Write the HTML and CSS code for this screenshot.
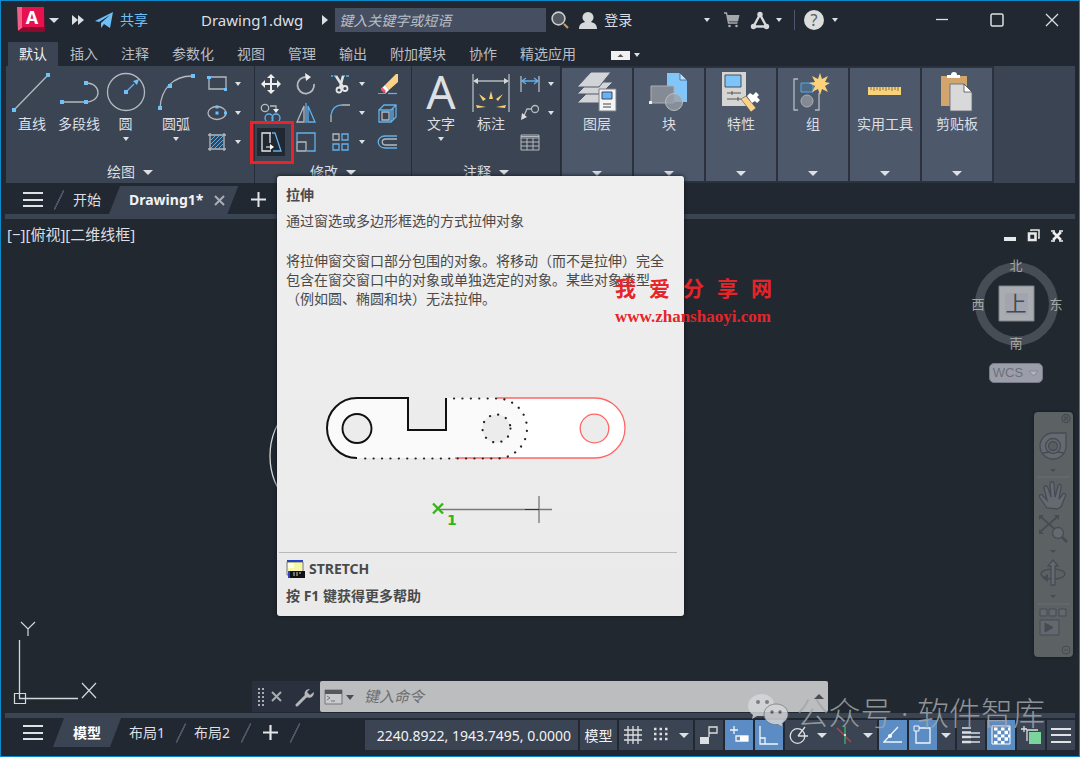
FILE: index.html
```html
<!DOCTYPE html>
<html lang="zh-CN">
<head>
<meta charset="utf-8">
<meta name="viewport" content="width=device-width, initial-scale=1">
<title>Drawing1.dwg</title>
<link rel="stylesheet" href="styles.css">
</head>
<body>
<div class="window">

  <header class="titlebar">
    <button class="app-button" aria-label="应用程序菜单">
      <svg width="30" height="28" viewBox="16 5 30 28"><path d="M17 6h5l2 20-6 4z" fill="#f2608a"/><path d="M22 6h22v20H22z" fill="#e5124d"/><path d="M18 30l5-4h21l1-19v23l-2 1H20z" fill="#8b0a30"/><text class="logo-letter" x="32" y="23" text-anchor="middle">A</text></svg>
      <span class="caret"></span>
    </button>
    <button class="quick-button" aria-label="快速访问"><svg width="14" height="12" viewBox="0 0 14 12"><path d="M1 1l6 5-6 5zM7 1l6 5-6 5z" fill="#dcdfe3"/></svg></button>
    <button class="share-button"><svg width="20" height="18" viewBox="94 9 20 18"><path d="M95 19l18-9-3 16-6-4-3 4v-5l9-8-11 7z" fill="#6fc0f8"/></svg>共享</button>
    <h1 class="doc-title">Drawing1.dwg</h1>
    <span class="caret-right"></span>
    <input class="search" type="search" aria-label="搜索" placeholder="键入关键字或短语">
    <button class="search-button" aria-label="搜索"><svg width="18" height="18" viewBox="0 0 18 18"><path d="M13 13l4 4" stroke="#c99a5b" stroke-width="2.2"/><circle cx="7.5" cy="7.5" r="6.4" fill="#535961" stroke="#c9ccd0" stroke-width="1.6"/></svg></button>
    <button class="login-button"><svg width="20" height="20" viewBox="0 0 20 20"><path d="M1 19c0-5 3-6 6-7a5.500 5.500 0 1 1 6 0c3 1 6 2 6 7z" fill="#d6d8db"/></svg>登录</button>
    <div class="title-tools">
      <button class="caret-button" aria-label="登录选项"><span class="caret small"></span></button>
      <button class="cart" aria-label="购物车"><svg width="18" height="18" viewBox="0 0 18 18"><path d="M1 2h2.500l2 10h9" fill="none" stroke="#a9adb3" stroke-width="1.300"/><path d="M4 4h12.500l-1.500 6.500H5.500z" fill="#a4a8ad"/><circle cx="6.500" cy="15" r="1.300" fill="#a9adb3"/><circle cx="13.500" cy="15" r="1.300" fill="#a9adb3"/></svg></button>
      <button class="apps" aria-label="Autodesk 应用"><svg width="20" height="19" viewBox="0 0 20 19"><path d="M10 3.500L3.500 15.500h13z" fill="none" stroke="#d6d8db" stroke-width="2.400"/><g fill="#d6d8db"><circle cx="10" cy="3.500" r="2.700"/><circle cx="3.500" cy="15.500" r="2.700"/><circle cx="16.500" cy="15.500" r="2.700"/></g></svg><span class="caret small"></span></button>
      <span class="title-divider"></span>
      <button class="help" aria-label="帮助"><span class="help-mark">?</span><span class="caret small"></span></button>
      <button class="win-button first" aria-label="最小化"><svg width="14" height="14" viewBox="0 0 14 14"><path d="M1 6.500h12" stroke="#dcdfe3" stroke-width="1.300"/></svg></button>
      <button class="win-button" aria-label="最大化"><svg width="14" height="14" viewBox="0 0 14 14"><rect x="1" y="1" width="12" height="12" rx="1.500" fill="none" stroke="#dcdfe3" stroke-width="1.500"/></svg></button>
      <button class="win-button" aria-label="关闭"><svg width="14" height="14" viewBox="0 0 14 14"><path d="M1 1l12 12M13 1L1 13" stroke="#dcdfe3" stroke-width="1.300"/></svg></button>
    </div>
  </header>

  <nav class="ribbon-tabs">
    <button class="active">默认</button><button>插入</button><button>注释</button><button>参数化</button><button>视图</button><button>管理</button><button>输出</button><button>附加模块</button><button>协作</button><button>精选应用</button>
    <button class="ribbon-toggle" aria-label="最小化功能区"><svg width="19" height="9" viewBox="0 0 19 9"><path d="M0 0h19v9H0z" fill="#f1f1f1"/><path d="M6.500 6l3-3 3 3z" fill="#555"/></svg><span class="caret small"></span></button>
  </nav>

  <section class="ribbon">
    <div class="panel">
      <div class="panel-tools draw-tools">
        <button class="big"><svg width="42" height="42" viewBox="11 71 42 42"><path d="M14 110L48 75" class="ln"/><g class="grip"><path d="M12 108h4v4h-4zM46 73h4v4h-4z"/></g></svg>直线</button>
        <button class="big"><svg width="42" height="42" viewBox="57 71 42 42"><path d="M61 102h24c16 0 16-19 0-19" class="ln"/><g class="grip"><path d="M59 100h4v4h-4zM83 100h4v4h-4zM83 81h4v4h-4z"/></g></svg>多段线</button>
        <button class="big"><svg width="42" height="42" viewBox="104 71 42 42"><circle cx="125" cy="92" r="18.500" class="ln"/><path d="M125 92l8-8" class="bl"/><g class="grip"><path d="M123 90h4v4h-4zM138 79l-2 6-4-4z"/></g></svg>圆<span class="caret small"></span></button>
        <button class="big"><svg width="42" height="42" viewBox="155 71 42 42"><path d="M160 108c1-19 13-32 32-32" class="ln"/><g class="grip"><path d="M158 106h4v4h-4zM168 84h4v4h-4zM191 74h4v4h-4z"/></g></svg>圆弧<span class="caret small"></span></button>
        <div class="small-column">
          <button class="split" aria-label="矩形"><svg width="24" height="24" viewBox="0 0 24 24"><path d="M4 5h17v12H4z" class="ln"/><path d="M2 4h4v3H2zM19 16h3v3h-3z" class="gripf"/></svg><span class="caret small"></span></button>
          <button class="split" aria-label="椭圆"><svg width="24" height="24" viewBox="0 0 24 24"><ellipse cx="12" cy="12" rx="9" ry="6.500" class="ln"/><path d="M10.500 4.500h3v3h-3zM10.500 10.500h3v3h-3zM19 10.500h3v3h-3z" class="gripf"/></svg><span class="caret small"></span></button>
          <button class="split" aria-label="图案填充"><svg width="24" height="24" viewBox="0 0 24 24"><path d="M6 10l4-4M6 14l8-8M6 18L18 6M10 18l8-8M14 18l4-4" class="bl thin"/><path d="M3 5h18M3 19h18M5 3v18M19 3v18" class="ln"/></svg><span class="caret small"></span></button>
        </div>
      </div>
      <button class="panel-title">绘图<span class="caret"></span></button>
    </div>

    <div class="panel">
      <div class="panel-tools modify-tools">
        <button aria-label="移动"><svg width="24" height="24" viewBox="0 0 24 24"><path d="M12 5v14M5 12h14" stroke="#eee" stroke-width="2"/><path d="M12 2l4 4H8zM12 22l4-4H8zM2 12l4-4v8zM22 12l-4-4v8z" fill="#eee"/></svg></button>
        <button aria-label="旋转"><svg width="24" height="24" viewBox="0 0 24 24"><path d="M12 5a8.300 8.300 0 1 0 8 7" class="ln thick"/><path d="M11 1l6 4-5 4z" fill="#eee"/></svg></button>
        <button class="split" aria-label="修剪"><svg width="24" height="24" viewBox="0 0 24 24"><path d="M2 4h5" class="bl" stroke-dasharray="2 1"/><path d="M13 4h8" class="bl" stroke-dasharray="3 1"/><path d="M7 4l7 11M14 4l-3 12" stroke="#e2e3e5" stroke-width="2.600"/><circle cx="10" cy="18" r="2.500" class="ln wh thick"/><circle cx="16" cy="16.500" r="2.500" class="ln wh thick"/></svg><span class="caret small"></span></button>
        <button aria-label="删除"><svg width="24" height="24" viewBox="0 0 24 24"><path d="M9 13L20 2h2v8L13 18z" fill="#fbd28a"/><path d="M9 13l4 5-3 3-5-4z" fill="#fff"/><path d="M6 15l4 4-2 2-3-3z" fill="#e56"/><path d="M2 21.500h8" stroke="#c9876d"/><path d="M12 21.500h9" class="bl"/></svg></button>

        <button aria-label="复制"><svg width="24" height="24" viewBox="0 0 24 24"><circle cx="6" cy="7" r="3.700" class="ln"/><circle cx="10" cy="17" r="4" class="bl"/><circle cx="17" cy="17" r="4" class="bl"/><path d="M11 5h6v3" class="ln"/><path d="M14 8h6l-3 4z" fill="#eee"/></svg></button>
        <button aria-label="镜像"><svg width="24" height="24" viewBox="0 0 24 24"><path d="M10 5v16H3z" class="ln"/><path d="M14 5v16h7z" class="bl"/><path d="M12 2v20" class="bl"/></svg></button>
        <button class="split" aria-label="圆角"><svg width="24" height="24" viewBox="0 0 24 24"><path d="M2 21v-7M13 4h8" class="ln"/><path d="M2 14C3 8 7 4 13 4" class="bl"/></svg><span class="caret small"></span></button>
        <button aria-label="分解"><svg width="24" height="24" viewBox="0 0 24 24"><path d="M6 11h7v8H6z" class="ln"/><path d="M3 9l5-5h12v12l-5 5H3V9h12v12M15 9l5-5M17 7v12" class="bl"/></svg></button>

        <button class="selected" aria-label="拉伸"><svg width="24" height="24" viewBox="0 0 24 24"><path d="M12 3H3v18h9M11 3v10" class="ln wh"/><path d="M13 3h3l6 18h-8" class="bl"/><path d="M7 17h5" stroke="#fff"/><path d="M11 14l4 3-4 3z" fill="#fff"/></svg></button>
        <button aria-label="缩放"><svg width="24" height="24" viewBox="0 0 24 24"><path d="M3 11V3h18v18h-8" class="bl"/><path d="M3 12h9v9H3z" class="ln"/></svg></button>
        <button class="split" aria-label="阵列"><svg width="24" height="24" viewBox="0 0 24 24"><path d="M4 4h6v6H4z" class="ln"/><path d="M13 4h6v6h-6zM4 14h6v6H4zM13 14h6v6h-6z" class="bl"/></svg><span class="caret small"></span></button>
        <button aria-label="偏移"><svg width="24" height="24" viewBox="0 0 24 24"><path d="M21 6H9C0 6 0 18 9 18h12" class="bl"/><path d="M21 9H10c-5 0-5 6 0 6h11" class="ln"/></svg></button>
      </div>
      <button class="panel-title">修改<span class="caret"></span></button>
    </div>

    <div class="panel">
      <div class="panel-tools annotate-tools">
        <button class="big"><svg width="42" height="42" viewBox="0 0 42 42" aria-hidden="true"><text class="letter-icon" x="21" y="38">A</text></svg>文字<span class="caret small"></span></button>
        <button class="big"><svg width="42" height="42" viewBox="470 71 42 42"><path d="M473 74v38M509 74v38M475 81h32" class="ln"/><path d="M473 81l5-3v6zM509 81l-5-3v6z" fill="#d5d7da"/><g fill="#fbd06e"><path d="M489 99l2-8 2 8zM483 101l-4-7 7 5zM498 101l5-7-7 5zM486 107l-10-2 1 3zM496 107l10-2-1 3z"/></g></svg>标注</button>
        <div class="small-column">
          <button class="split" aria-label="线性"><svg width="24" height="24" viewBox="0 0 24 24"><path d="M3 4v16M21 4v16" class="ln"/><path d="M4 9h16M8 6L4 9l4 3M16 6l4 3-4 3" class="bl"/></svg><span class="caret small"></span></button>
          <button class="split" aria-label="引线"><svg width="24" height="24" viewBox="0 0 24 24"><circle cx="17" cy="8" r="3.500" class="ln"/><path d="M13 8h-4l-4 9" class="ln"/><path d="M3 19l1-7 5 4z" fill="#ddd"/></svg><span class="caret small"></span></button>
          <button aria-label="表格"><svg width="24" height="24" viewBox="0 0 24 24"><path d="M3 5h18v15H3zM3 8h18M3 12h18M3 16h18M9 8v12M15 8v12M3 6.500h18" class="ln thin"/></svg></button>
        </div>
      </div>
      <button class="panel-title">注释<span class="caret"></span></button>
    </div>

    <div class="collapsed-panels">
      <button><svg width="42" height="42" viewBox="575 71 42 42"><g fill="#d2d4d7" stroke="#4d596b"><path d="M588 91h24l-12 12h-24z"/><path d="M588 82h24l-12 12h-24z"/><path d="M590 72h20l-12 15h-22z"/></g><path d="M598 89h17v22h-17z" fill="#f4f4f4" stroke="#77808c"/><path d="M601 92h10v7h-10z" fill="#65b5f2" stroke="#446"/><path d="M602 104h8M602 107h8" stroke="#444"/></svg><span>图层</span><span class="caret"></span></button>
      <button><svg width="42" height="42" viewBox="647 71 42 42"><path d="M666 73h13l7 7v22h-20z" fill="#82c5f8"/><path d="M679 73v7h7z" fill="#b9e0fd" stroke="#39506a" stroke-width=".7"/><path d="M650 86h23v17h-23z" fill="#858b95" stroke="#aaaeb5"/><circle cx="673" cy="102" r="8.500" fill="#9aa0a9" fill-opacity=".75" stroke="#b9bdc2"/><path d="M648 101h3v3h-3z" fill="#eee"/></svg><span>块</span><span class="caret"></span></button>
      <button><svg width="42" height="42" viewBox="719 71 42 42"><path d="M721 72h24v34h-24z" fill="#d5d5d3"/><path d="M724 75h16v12h-16z" fill="#7cc4fa" stroke="#46515f"/><path d="M726 93h14M726 99h14M731 91v4M737 97v4" stroke="#555"/><path d="M740 99l5-3 10 12-5 4z" fill="#fbd28a" stroke="#555" stroke-width=".6"/><path d="M746 96l5 7 3-2 2 2 3-3-3-3 2-2-3-3-3 3-3-2z" fill="#fff"/></svg><span>特性</span><span class="caret"></span></button>
      <button><svg width="42" height="42" viewBox="791 71 42 42"><path d="M797 79h-4v31h4M814 110h4V93" class="ln"/><path d="M800 83h12v9h-12z" fill="#496a89" stroke="#5aa8e0"/><circle cx="806" cy="101" r="6" fill="#848a93" stroke="#aaaeb5"/><path d="M819 73l2 6 6-3-3 6 5 1-5 3 3 6-6-3-2 6-2-6-6 3 3-6-6-3 6-1-3-6 6 3z" fill="#fbd27c"/></svg><span>组</span><span class="caret"></span></button>
      <button><svg width="42" height="42" viewBox="863 71 42 42"><path d="M867 87h33v8h-33z" fill="#fbd27c"/><path d="M870 87v3M873 87v4M876 87v3M879 87v4M882 87v3M885 87v4M888 87v3M891 87v4M894 87v3M897 87v4" stroke="#8a713c"/></svg><span>实用工具</span><span class="caret"></span></button>
      <button><svg width="42" height="42" viewBox="934 71 42 42"><path d="M939 76h26v30h-26z" fill="#d2a56d"/><path d="M945 78v-3h4q0-3 3-3t3 3h3v3z" fill="#fff"/><path d="M948 84h14l8 8v19h-22z" fill="#d9d9d9" stroke="#5a6472" stroke-width=".8"/><path d="M962 84v8h8z" fill="#fff" stroke="#333" stroke-width=".7"/></svg><span>剪贴板</span><span class="caret"></span></button>
    </div>
    <span class="callout" aria-hidden="true"></span>
  </section>

  <nav class="file-tabs">
    <button class="menu" aria-label="菜单"><span class="bars"></span></button>
    <span class="slash"></span>
    <button class="file-start">开始</button>
    <button class="file-active">Drawing1*<svg width="11" height="11" viewBox="0 0 11 11"><path d="M1 1l9 9M10 1l-9 9" stroke="#a9afb8" stroke-width="2"/></svg></button>
    <button class="plus" aria-label="新建"><svg width="17" height="17" viewBox="0 0 17 17"><path d="M8.500 1v15M1 8.500h15" stroke="#e3e5e8" stroke-width="2"/></svg></button>
  </nav>

  <main class="canvas">
    <div class="view-controls">[−][俯视][二维线框]</div>
    <div class="view-buttons">
      <button aria-label="最小化视口"><svg width="12" height="12" viewBox="0 0 12 12"><path d="M0 7h12v4H0z" fill="#e8e8e8"/></svg></button>
      <button aria-label="还原视口"><svg width="13" height="13" viewBox="0 0 13 13"><path d="M4 2V1h8v8h-1" fill="none" stroke="#e8e8e8" stroke-width="1.500"/><path d="M2 4.500h6.500V11H2z" fill="none" stroke="#e8e8e8" stroke-width="2.600"/></svg></button>
      <button aria-label="关闭视口"><svg width="12" height="12" viewBox="0 0 12 12"><path d="M2 2l8 8M10 2l-8 8" stroke="#eee" stroke-width="2.500"/><path d="M0 1h4M8 1h4M0 11h4M8 11h4" stroke="#eee" stroke-width="1.500"/></svg></button>
    </div>
    <div class="view-cube">
      <svg width="96" height="96" viewBox="968 256 96 96"><circle cx="1016.500" cy="304" r="37" fill="none" stroke="#474d54" stroke-width="9"/><path d="M999 286h35v35h-35z" fill="#a9acb0" stroke="#808386"/><path d="M1005 293h23v22h-23z" fill="#a2a5b0"/><g class="compass"><text x="1016" y="270">北</text><text x="1016" y="348">南</text><text x="978" y="309">西</text><text x="1056" y="309">东</text></g><text class="cube-face" x="1016" y="311">上</text></svg>
      <button class="wcs">WCS<svg width="11" height="7" viewBox="0 0 11 7"><path d="M1 1h9L5.500 6z" fill="#b2b5be" stroke="#858892"/></svg></button>
    </div>
    <div class="nav-bar">
      <svg width="39" height="245" viewBox="1034 412 39 245"><g fill="none" stroke="#474c54" stroke-width="1.300"><circle cx="1066" cy="418.500" r="4"/><path d="M1064 416.500l4 4M1068 416.500l-4 4"/><path d="M1053 433h13v13a13 13 0 1 1-13-13z" fill="#656970"/><circle cx="1053" cy="446" r="7.500"/><circle cx="1053" cy="446" r="4.500" fill="#5a5e62"/><path d="M1043 453l7-1M1064 453l-7-1"/><path d="M1047 508l-7-10c-2-3 1-5 3-2l4 4-3-12c0-3 3-3 4 0l3 9-1-13c0-3 4-3 4 0l1 13 3-11c1-3 4-2 3 1l-2 12 3-4c2-3 5-1 3 2l-4 10-4 2z" fill="#656970"/><path d="M1041 517l17 15M1057 517l-17 15" stroke-width="1.800"/><circle cx="1058" cy="533" r="5.500" fill="#656970"/><path d="M1062 537l5 5" stroke-width="3"/><ellipse cx="1053" cy="574" rx="12" ry="5"/><path d="M1051 585v-19h-3l5-6 5 6h-3v19z" fill="#656970"/></g><g fill="#474c54"><path d="M1039 515h5l-5 5zM1059 515h-5l5 5zM1039 534v-5l5 5zM1042 578l6-4v8zM1050 469h6l-3 3zM1050 550h6l-3 3zM1050 595h6l-3 3z"/></g><path d="M1037 477h33M1037 604h33" stroke="#6a6f73"/><g fill="#63676e" stroke="#474c54"><path d="M1040 609h7v7h-7zM1049 609h7v7h-7zM1059 609h7v7h-7zM1040 620h19v15h-19z"/><path d="M1045 623v9l8-4.500z" fill="#474c54"/></g><circle cx="1066" cy="650" r="4" fill="none" stroke="#474c54"/><path d="M1064 650h4" stroke="#474c54"/></svg>
    </div>
    <svg class="model-circle" width="138" height="138" viewBox="0 0 138 138"><circle cx="69" cy="69" r="67" fill="none" stroke="#d6d8da" stroke-width="1.300"/></svg>
    <svg class="ucs-icon" width="88" height="88" viewBox="12 618 88 88"><path d="M19.500 640v58.500H78" fill="none" stroke="#d5d7d9" stroke-width="1.300"/><path d="M14.500 693.500h11v10h-11zM21 622l7 7 7-7M28 629v7M82 683l14 15M96 683l-14 15" fill="none" stroke="#d5d7d9" stroke-width="1.200"/></svg>
    <div class="command-line">
      <span class="grab"></span>
      <button aria-label="关闭命令行"><svg width="11" height="11" viewBox="0 0 11 11"><path d="M1 1l9 9M10 1l-9 9" stroke="#a9acb0" stroke-width="2"/></svg></button>
      <button class="wrench" aria-label="自定义"><svg width="20" height="20" viewBox="0 0 20 20"><path d="M2 18l9-9" stroke="#b5b7b9" stroke-width="3" stroke-linecap="round"/><path d="M15 2l-3 3 3 3 4-3c0 5-4 7-8 5-3-3-1-8 4-8z" fill="#b5b7b9"/></svg></button>
      <label class="command-box">
        <svg width="30" height="16" viewBox="0 0 30 16"><path d="M1 1h17v14H1z" fill="#c9cacb" stroke="#777"/><path d="M1 1h17v4H1z" fill="#55585c"/><path d="M3 7l3 2-3 2M7 12h4" fill="none" stroke="#777"/><path d="M22 6h8l-4 5z" fill="#4b4d50"/></svg>
        <input type="text" aria-label="命令" placeholder="键入命令">
        <span class="caret-up"></span>
      </label>
    </div>
  </main>

  <footer class="statusbar">
    <div class="layout-tabs">
      <button class="menu" aria-label="布局菜单"><span class="bars"></span></button>
      <button class="layout-active">模型</button>
      <button class="layout-tab">布局1</button><span class="slash"></span>
      <button class="layout-tab">布局2</button><span class="slash"></span>
      <button class="plus" aria-label="新建布局"><svg width="17" height="17" viewBox="0 0 17 17"><path d="M8.500 1v15M1 8.500h15" stroke="#e3e5e8" stroke-width="2.200"/></svg></button><span class="slash"></span>
    </div>
    <div class="status-tools">
      <span class="coords">2240.8922, 1943.7495, 0.0000</span>
      <button class="model">模型</button>
      <div class="status-group">
        <button class="tool" aria-label="栅格"><svg width="20" height="20" viewBox="0 0 20 20"><path d="M5 1v18M10 1v18M15 1v18M1 5h18M1 10h18M1 15h18" class="st"/></svg></button>
        <button class="tool" aria-label="捕捉"><svg width="20" height="20" viewBox="0 0 20 20"><path d="M3 4h14M3 9h14M3 14h14" stroke="#dcdee1" stroke-width="2.500" stroke-dasharray="2.500 3"/></svg></button>
        <button class="arrow" aria-label="捕捉选项"><span class="caret"></span></button>
      </div>
      <button class="tool" aria-label="推断约束"><svg width="20" height="20" viewBox="0 0 20 20"><path d="M1 12h9v7H1z" fill="#dcdee1"/><path d="M10 12V2h8v6h-8" class="st"/></svg></button>
      <button class="tool on" aria-label="动态输入"><svg width="20" height="20" viewBox="0 0 20 20"><path d="M5 1v8M1 5h8" class="st"/><path d="M7 11h12v5H7z" class="st"/><path d="M11 11h8v5h-8z" fill="#fff"/></svg></button>
      <button class="tool on" aria-label="正交"><svg width="20" height="20" viewBox="0 0 20 20"><path d="M1 1v18h18M1 13h5v6" class="st"/></svg></button>
      <div class="status-group">
        <button class="tool" aria-label="极轴追踪"><svg width="20" height="20" viewBox="0 0 20 20"><circle cx="8.500" cy="11" r="7.300" class="st"/><path d="M9 11l7-9M9 11h10" class="st"/></svg></button>
        <button class="arrow" aria-label="极轴选项"><span class="caret"></span></button>
        <button class="tool" aria-label="等轴测草图"><svg width="20" height="20" viewBox="0 0 20 20"><path d="M2 3l14 14" stroke="#a04a50" stroke-width="1.500"/><path d="M10 1v18" stroke="#3ea66a" stroke-width="1.500"/><path d="M9 9h2v2H9z" fill="#ddd"/></svg></button>
        <button class="arrow" aria-label="等轴测选项"><span class="caret"></span></button>
      </div>
      <button class="tool on" aria-label="对象捕捉追踪"><svg width="20" height="20" viewBox="0 0 20 20"><path d="M15 2L1 17h18" class="st"/><circle cx="7" cy="11" r="2" fill="#fff"/></svg></button>
      <div class="status-group">
        <button class="tool on" aria-label="对象捕捉"><svg width="20" height="20" viewBox="0 0 20 20"><path d="M3 3h14v15H3z" class="st"/><path d="M1 1h5v5H1z" fill="#5b8cc4" stroke="#f2f5f9"/></svg></button>
        <button class="arrow" aria-label="捕捉模式"><span class="caret"></span></button>
      </div>
      <button class="tool" aria-label="线宽"><svg width="20" height="20" viewBox="0 0 20 20"><path d="M1 3h9M10 8h9M10 12h9M10 17h9" class="st"/><path d="M1 7.500h9M1 12h9M1 17h9" stroke="#dcdee1" stroke-width="2.500"/></svg></button>
      <button class="tool on" aria-label="透明度"><svg width="20" height="20" viewBox="0 0 20 20"><path d="M1 1h18v18H1z" fill="#5b8cc4" stroke="#fff"/><path d="M3 4h16M3 11h16M3 17.500h14" stroke="#fff" stroke-width="3" stroke-dasharray="3.500 3.500"/><path d="M6.500 7.500H18M6.500 14H18" stroke="#fff" stroke-width="3.500" stroke-dasharray="3.500 3.500"/></svg></button>
      <button class="tool" aria-label="选择循环"><svg width="20" height="20" viewBox="0 0 20 20"><path d="M3 1v6M0 4h6M6 16V5h11" class="st"/><path d="M8 7h12v12H8z" fill="#7bd49a"/></svg></button>
      <button class="tool" aria-label="自定义"><span class="bars"></span></button>
    </div>
  </footer>

  <aside class="tooltip" role="tooltip">
    <h2>拉伸</h2>
    <p class="summary">通过窗选或多边形框选的方式拉伸对象</p>
    <p class="description">将拉伸窗交窗口部分包围的对象。将移动（而不是拉伸）完全包含在窗交窗口中的对象或单独选定的对象。某些对象类型（例如圆、椭圆和块）无法拉伸。</p>
    <svg class="figure" width="330" height="140" viewBox="310 390 330 140">
      <path d="M497 398h98a30 30 0 0 1 0 60H455z" fill="#fff"/>
      <path d="M357 398h51v32h38v-32h51a30 30 0 0 1 0 60H357a30 30 0 0 1 0-60z" fill="#fafafa"/>
      <g fill="none" stroke="#f66" stroke-width="1.300"><path d="M497 398h98a30 30 0 0 1 0 60H455"/><circle cx="594.500" cy="428.500" r="14.300" fill="#ececec"/></g>
      <circle cx="496.500" cy="428.500" r="14" fill="#ececec"/>
      <g fill="none" stroke="#222" stroke-width="2.200" stroke-linecap="round" stroke-dasharray=".1 8.300"><path d="M454 398.500h43a30 30 0 0 1 0 60H362"/><circle cx="496.500" cy="428.500" r="14"/></g>
      <path d="M357 458a30 30 0 0 1 0-60h51v32h38v-32" fill="none" stroke="#111" stroke-width="2"/>
      <circle cx="357" cy="428.500" r="14.500" fill="#ececec" stroke="#111" stroke-width="1.900"/>
      <path d="M440 509.500h112M539 496v27" stroke="#777" stroke-width="1.300"/><path d="M525 509.500h14" stroke="#333"/>
      <path d="M433 503.500l10 10M443 503.500l-10 10" stroke="#30b616" stroke-width="2.300"/>
      <text class="point-label" x="447" y="525">1</text>
    </svg>
    <div class="tip-footer">
      <div class="tip-command"><svg width="20" height="19" viewBox="0 0 20 19"><path d="M1 2h16v13H1z" fill="#f8f6a8" stroke="#777"/><path d="M2 3h6v5H2z" fill="#fff" opacity=".7"/><path d="M1 1h16" stroke="#2742c8" stroke-width="2"/><path d="M3 11h16v7H3z" fill="#111"/><path d="M3 11v7" stroke="#2742c8" stroke-width="2"/><path d="M7 13h9M7 15h5" stroke="#ccc" stroke-dasharray="2 1"/></svg>STRETCH</div>
      <div class="tip-help">按 F1 键获得更多帮助</div>
    </div>
  </aside>

  <div class="site-mark">
    <div class="site-name"><span>我</span><span>爱</span><span>分</span><span>享</span><span>网</span></div>
    <div class="site-url">www.zhanshaoyi.com</div>
  </div>
  <div class="account-mark">
    <svg width="42" height="34" viewBox="748 697 42 34"><path d="M763 697c-8 0-14 5-14 12 0 4 2 7 5 9l-1 4 5-3h8l3-5 6-5c1-7-5-12-12-12z" fill="#d4d6d8"/><g fill="#70757b"><circle cx="759" cy="705" r="2"/><circle cx="768" cy="705" r="2"/></g><path d="M777 707c-7 0-12 4.500-12 10.500s6 11 14 10l5 3-1-4c3-2 6-5 6-9 0-6-5-10.500-12-10.500z" fill="#d4d6d8" stroke="#636a73" stroke-width=".7"/><g fill="#5d636b"><circle cx="773" cy="715" r="1.700"/><circle cx="781" cy="715" r="1.700"/></g></svg>
    <span>公众号 · 软件智库</span>
  </div>
</div>
</body>
</html>
```
FILE: styles.css
```css
* { box-sizing: border-box; }

body {
  margin: 0;
  font-family: "Noto Sans", "Noto Sans CJK SC", sans-serif;
  font-size: 14px;
  line-height: 20px;
  color: #dcdfe3;
}

button, input {
  font: inherit;
  color: inherit;
  margin: 0;
  padding: 0;
  border: 0;
  background: none;
}

button {
  display: flex;
  align-items: center;
  justify-content: center;
  white-space: nowrap;
}

svg { display: block; flex: none; }
h1, h2, p { margin: 0; }

.window {
  position: relative;
  display: flex;
  flex-direction: column;
  min-height: 100vh;
  border: 1px solid #0a8acb;
  background: #222831;
  overflow: hidden;
}

.caret {
  flex: none;
  border: 5px solid transparent;
  border-top-color: #dcdfe3;
  border-bottom: 0;
}
.caret.small { border-width: 4px 3px 0; }
.caret-right {
  border: 5px solid transparent;
  border-left: 6px solid #dcdfe3;
  border-right: 0;
}
.caret-up {
  border: 5px solid transparent;
  border-bottom-color: #4b4d50;
  border-top: 0;
}

/* Title bar */
.titlebar {
  display: flex;
  align-items: center;
  height: 38px;
  padding: 0 20px 0 15px;
}
.app-button { gap: 3px; }
.logo-letter { font: bold 18px "Noto Sans", sans-serif; fill: #fff; }
.quick-button { margin-left: 12px; }
.share-button { gap: 6px; margin-left: 9px; color: #6fc0f8; }
.doc-title { margin: 0 19px 0 53px; font-size: 15px; font-weight: 400; }
.search {
  flex: 0 1 211px;
  min-width: 0;
  height: 24px;
  margin-left: 7px;
  padding: 0 4px;
  background: #454f61;
}
.search::placeholder { color: #b9bec7; font-style: italic; opacity: 1; }
.search-button { margin-left: 5px; }
.login-button { gap: 6px; margin-left: 9px; }
.title-tools { display: flex; align-items: center; margin-left: auto; }
.cart { margin-left: 13px; }
.apps { gap: 6px; margin-left: 9px; }
.title-divider { width: 1px; height: 20px; margin: 0 9px 0 12px; background: #4a566c; }
.help { gap: 8px; }
.help-mark {
  width: 20px;
  height: 20px;
  border-radius: 50%;
  background: #dcdcdc;
  color: #555b64;
  font-size: 16px;
}
.win-button { margin-left: 41px; }
.win-button.first { margin-left: 97px; }

/* Ribbon tabs */
.ribbon-tabs {
  display: flex;
  align-items: flex-end;
  gap: 1px;
  height: 27px;
  padding-left: 7px;
  color: #b9bec6;
}
.ribbon-tabs button { height: 24px; padding: 0 11px; }
.ribbon-tabs .active { background: #3b4453; color: #f1f2f4; }
.ribbon-tabs .ribbon-toggle { gap: 4px; padding: 2px 0 0 23px; }

/* Ribbon */
.ribbon {
  position: relative;
  display: flex;
  height: 117px;
  margin: 0 4px 0 5px;
  background: #3b4453;
}
.panel {
  display: flex;
  flex-direction: column;
  justify-content: space-between;
  align-items: center;
  border-right: 1px solid #262d38;
}
.panel-tools { display: grid; padding-top: 5px; }
.panel-title { gap: 8px; height: 22px; }
.draw-tools { grid-template-columns: 48px 46px 47px 54px 46px; padding-left: 2px; padding-right: 5px; }
.modify-tools { grid-template-columns: repeat(2, 35px) 47px 35px; row-gap: 5px; padding: 6px 0 0 4px; }
.annotate-tools { grid-template-columns: 50px 50px 43px; padding: 5px 1px 0 4px; }
.modify-tools button, .small-column button { justify-content: flex-start; height: 24px; }
.small-column { display: flex; flex-direction: column; gap: 5px; padding: 1px 0 0 2px; }
.split { gap: 6px; }
.big { flex-direction: column; justify-content: flex-start; height: 83px; }
.big svg, .collapsed-panels svg { margin-bottom: 1px; }
.big .caret { margin-top: 3px; }
.letter-icon { font-size: 46px; text-anchor: middle; fill: #dcdfe3; }
.selected svg { background: #222831; outline: 2px solid #222831; }
.ln { fill: none; stroke: #b5b9c0; stroke-width: 1.3px; }
.wh { stroke: #e5e7e9; }
.bl { fill: none; stroke: #62b0ea; stroke-width: 1.3px; }
.thick { stroke-width: 1.8px; }
.thin { stroke-width: 1px; }
.grip, .gripf { fill: #70c0fa; }
.collapsed-panels {
  display: flex;
  gap: 2px;
  padding: 2px 2px 2px 1px;
  background: #2b323e;
}
.collapsed-panels button {
  flex-direction: column;
  justify-content: flex-start;
  width: 70px;
  padding: 3px 0 5px;
  background: #4d596b;
}
.collapsed-panels .caret { margin-top: auto; }
.callout {
  position: absolute;
  left: 244px;
  top: 55px;
  width: 44px;
  height: 43px;
  border: 3px solid #ea2229;
}

/* File tabs */
.file-tabs {
  display: flex;
  align-items: center;
  height: 36px;
  margin: 0 4px;
  padding: 2px 0 0 18px;
  border-bottom: 5px solid #3b4453;
}
.bars {
  width: 20px;
  height: 15px;
  border: solid #dfe1e4;
  border-width: 2px 0;
  background: linear-gradient(#dfe1e4, #dfe1e4) center / 100% 2px no-repeat;
}
.slash {
  width: 10px;
  height: 20px;
  background: linear-gradient(116deg, transparent 45%, #4b5565 46%, #4b5565 54%, transparent 55%);
}
.file-tabs .slash { margin: 0 9px 0 11px; }
.file-active {
  align-self: flex-end;
  gap: 11px;
  height: 28px;
  margin-left: 8px;
  padding: 0 13px 0 20px;
  background: #3b4453;
  clip-path: polygon(11px 0, 100% 0, calc(100% - 11px) 100%, 0 100%);
  color: #f1f2f4;
  font-weight: 700;
}
.file-tabs .plus { margin-left: 12px; }

/* Drawing area */
.canvas { position: relative; flex: 1; min-height: 480px; background: #212830; }
.view-controls { padding: 5px 6px; font-size: 15px; }
.view-buttons { position: absolute; top: 10px; right: 16px; display: flex; gap: 11px; }
.view-cube { position: absolute; top: 37px; right: 15px; }
.compass, .cube-face { text-anchor: middle; }
.compass { font-size: 13px; fill: #a5a6a4; }
.cube-face { font-size: 21px; fill: #454a51; }
.wcs {
  gap: 5px;
  width: 54px;
  height: 20px;
  margin: 11px auto 0;
  border: 1px solid #777b85;
  border-radius: 5px;
  background: #9b9eaa;
  color: #6c7079;
  font-family: "Liberation Sans", sans-serif;
  font-size: 13px;
}
.nav-bar {
  position: absolute;
  top: 193px;
  right: 6px;
  border-radius: 4px;
  background: #5c6164;
  box-shadow: 0 0 3px #15191f;
}
.model-circle { position: absolute; left: 267px; top: 168px; }
.ucs-icon { position: absolute; left: 11px; bottom: 7px; }
.command-line {
  position: absolute;
  inset: auto 0 1px;
  display: flex;
  align-items: center;
  width: 576px;
  height: 31px;
  margin: 0 auto;
  padding-left: 5px;
  background: #2a303d;
}
.grab {
  width: 7px;
  height: 20px;
  margin-right: 7px;
  background: radial-gradient(circle, #aaadb2 1px, transparent 1px) 0 0 / 4px 4px;
}
.wrench { margin: 0 5px 0 13px; }
.command-box {
  display: flex;
  flex: 1;
  align-items: center;
  align-self: stretch;
  gap: 10px;
  padding: 0 4px;
  border-radius: 2px;
  background: #bcbdbf;
}
.command-box input { flex: 1; min-width: 0; color: #4b4d50; }
.command-box input::placeholder { color: #6b6d70; font-size: 15px; font-style: italic; opacity: 1; }

/* Status bar */
.statusbar {
  display: flex;
  justify-content: space-between;
  height: 43px;
  margin: 0 4px;
  border-top: 5px solid #3b4453;
}
.layout-tabs { display: flex; align-items: center; height: 29px; padding-left: 18px; }
.layout-active {
  height: 29px;
  margin-left: 10px;
  padding: 0 20px;
  background: #3b4453;
  clip-path: polygon(11px 0, 100% 0, calc(100% - 11px) 100%, 0 100%);
  color: #fff;
  font-weight: 700;
}
.layout-tab { margin: 0 11px 0 8px; }
.layout-tabs .plus { margin: 0 11px; }
.status-tools { display: flex; gap: 2px; height: 30px; margin-top: 2px; }
.status-tools > * { background: #3b4453; }
.coords {
  width: 213px;
  padding: 6px 7px 4px;
  color: #f1f2f4;
  text-align: right;
  white-space: nowrap;
}
.model { width: 37px; padding-top: 2px; color: #f1f2f4; }
.status-group { display: flex; }
.tool { width: 28px; }
.arrow { width: 18px; }
.on, .status-tools > .on { background: #5b8cc4; }
.st { fill: none; stroke: #dcdee1; stroke-width: 1.3px; }
.on .st { stroke: #f2f5f9; }

/* Command tooltip */
.tooltip {
  position: absolute;
  left: 276px;
  top: 175px;
  width: 407px;
  height: 440px;
  padding: 9px;
  border-radius: 3px;
  background: linear-gradient(#efefef, #eaeaea);
  box-shadow: 0 0 4px #11151b;
  color: #4a4a4a;
}
.tooltip h2 { font-size: 14px; line-height: 20px; font-weight: 700; }
.summary { margin-top: 6px; }
.description { margin-top: 20px; line-height: 19px; }
.figure { margin: 82px 0 0 24px; }
.point-label { font: bold 14px "DejaVu Sans", sans-serif; fill: #30b616; }
.tip-footer { margin: 22px -2px 0 -7px; padding: 6px 7px; border-top: 1px solid #bababa; font-weight: 700; }
.tip-command { display: flex; align-items: center; gap: 3px; }
.tip-help { margin-top: 7px; }

/* Marks laid over the page */
.site-mark { position: absolute; left: 614px; top: 275px; color: #e5252a; font-weight: 700; }
.site-name { display: flex; gap: 13px; font-size: 21px; line-height: 25px; }
.site-url { margin-top: 6px; font: bold 17px/20px "Liberation Serif", serif; }
.account-mark {
  position: absolute;
  right: 34px;
  bottom: 21px;
  display: flex;
  align-items: center;
  gap: 8px;
  opacity: .85;
  color: #a2a6ab;
  font-size: 32px;
  font-weight: 300;
  line-height: 44px;
  white-space: nowrap;
}
.account-mark svg { margin-bottom: 4px; }
```
